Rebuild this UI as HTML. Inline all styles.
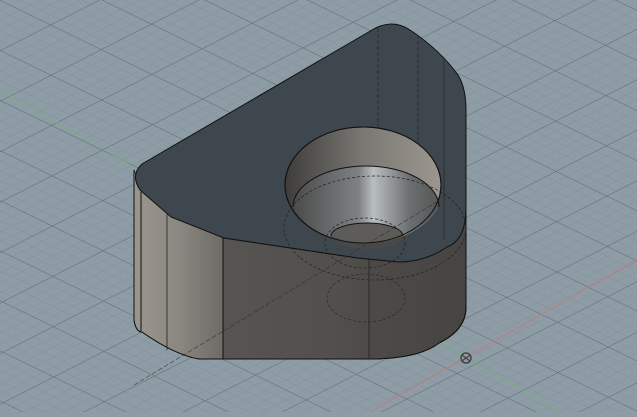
<!DOCTYPE html>
<html><head><style>html,body{margin:0;padding:0;background:#8e9da5;overflow:hidden}</style></head>
<body>
<svg width="637" height="412" viewBox="0 0 637 412" xmlns="http://www.w3.org/2000/svg">
<defs>
<pattern id="pa" width="200" height="9" patternUnits="userSpaceOnUse" patternTransform="rotate(26)">
<rect width="200" height="9" fill="none"/><line x1="0" y1="0" x2="200" y2="0" stroke="#7f8e96" stroke-width="0.8"/></pattern>
<pattern id="pb" width="200" height="9" patternUnits="userSpaceOnUse" patternTransform="rotate(-27)">
<line x1="0" y1="0" x2="200" y2="0" stroke="#7f8e96" stroke-width="0.8"/></pattern>
<pattern id="pA" width="400" height="45" patternUnits="userSpaceOnUse" patternTransform="rotate(26)">
<line x1="0" y1="0" x2="400" y2="0" stroke="#5f6c74" stroke-width="1"/></pattern>
<pattern id="pB" width="400" height="45" patternUnits="userSpaceOnUse" patternTransform="rotate(-27)">
<line x1="0" y1="0" x2="400" y2="0" stroke="#5f6c74" stroke-width="1"/></pattern>
<linearGradient id="gl" x1="0" x2="1"><stop offset="0" stop-color="#9a968f"/><stop offset="0.5" stop-color="#8b8781"/><stop offset="1" stop-color="#6e6b67"/></linearGradient>
<linearGradient id="gf" x1="0" x2="1"><stop offset="0" stop-color="#5a5855"/><stop offset="0.6" stop-color="#52504d"/><stop offset="1" stop-color="#3f3e3c"/></linearGradient>
<linearGradient id="gc" x1="0" x2="1"><stop offset="0" stop-color="#4a4a4a"/><stop offset="0.45" stop-color="#7e8284"/><stop offset="0.55" stop-color="#b9bec0"/><stop offset="0.8" stop-color="#6b6e70"/><stop offset="1" stop-color="#555"/></linearGradient>
<linearGradient id="gh" x1="0" x2="1"><stop offset="0" stop-color="#3e3d3b"/><stop offset="0.5" stop-color="#7b7873"/><stop offset="1" stop-color="#9b978f"/></linearGradient>
</defs>
<rect width="637" height="412" fill="#8e9da5"/>
<rect width="637" height="412" fill="url(#pa)"/>
<rect width="637" height="412" fill="url(#pb)"/>
<rect width="637" height="412" fill="url(#pA)"/>
<rect width="637" height="412" fill="url(#pB)"/>
<line x1="0" y1="90" x2="560" y2="412" stroke="#74b07c" stroke-width="1.2" opacity="0.8"/>
<line x1="370" y1="412" x2="637" y2="260" stroke="#c07a7e" stroke-width="1.2" opacity="0.8"/>
<path d="M134 170 L134 320 Q136 332 142 332 Q175 355 199 359 L374 359 Q420 358 439 343 Q466 330 466 307 L466 207 Q466 240 447 247 Q425 262 398 262 L358 258 L224 238 L171 217 L140 190 Z" fill="url(#gf)" stroke="#111" stroke-width="1"/>
<path d="M134 170 L134 320 Q136 332 142 332 Q175 355 199 359 L223 359 L223 238 L171 217 L140 190 Z" fill="url(#gl)"/>
<path d="M369 259 L369 359 L374 359 Q420 358 439 343 Q466 330 466 307 L466 207 Q466 240 447 247 Q425 262 398 262 Z" fill="#4c4a48" opacity="0.6"/>
<path d="M134 170 L134 320 Q136 332 142 332 Q175 355 199 359 L374 359 Q420 358 439 343 Q466 330 466 307 L466 207" fill="none" stroke="#111" stroke-width="1"/>
<line x1="141" y1="192" x2="141" y2="331" stroke="#111"/>
<line x1="167" y1="213" x2="167" y2="350" stroke="#222" stroke-width="0.8"/>
<line x1="223" y1="238" x2="223" y2="359" stroke="#111"/>
<line x1="369" y1="259" x2="369" y2="359" stroke="#222" stroke-width="0.8"/>
<ellipse cx="366" cy="298" rx="39" ry="24" fill="none" stroke="#2a2a2a" stroke-width="0.7" stroke-dasharray="3 2"/>
<path d="M140 190 Q130 175 142 164 L372 30 Q392 18 410 30 Q440 50 458 75 Q466 88 466 110 L466 207 Q466 240 447 247 Q425 262 398 262 L358 258 L224 238 L171 217 Z" fill="#3e474d" stroke="#111" stroke-width="1"/>
<line x1="378" y1="28" x2="378" y2="200" stroke="#222" stroke-width="0.7" stroke-dasharray="4 2"/>
<line x1="418" y1="35" x2="418" y2="200" stroke="#222" stroke-width="0.7" stroke-dasharray="4 2"/>
<line x1="444" y1="60" x2="444" y2="240" stroke="#222" stroke-width="0.7"/>
<ellipse cx="363" cy="185" rx="78" ry="58" fill="url(#gh)" stroke="#111" stroke-width="1"/>
<path d="M293 207 A73 41 0 0 1 439 207 A78 58 0 0 1 363 243 A78 58 0 0 1 293 207 Z" fill="url(#gc)"/>
<path d="M293 207 A73 41 0 0 1 439 207" fill="none" stroke="#111" stroke-width="1"/>
<ellipse cx="367" cy="236" rx="36" ry="13" fill="#4a4948"/>
<path d="M331 236 A36 13 0 0 1 403 236 A78 58 0 0 1 363 243 Q345 242 331 236Z" fill="#5e5c59"/>
<path d="M331 236 A36 13 0 0 1 403 236" fill="none" stroke="#111" stroke-width="1"/>
<ellipse cx="363" cy="185" rx="78" ry="58" fill="none" stroke="#111" stroke-width="1"/>
<ellipse cx="375" cy="228" rx="91" ry="52" fill="none" stroke="#222" stroke-width="0.7" stroke-dasharray="3 2"/>
<ellipse cx="365" cy="243" rx="40" ry="25" fill="none" stroke="#222" stroke-width="0.7" stroke-dasharray="3 2"/>
<line x1="134" y1="385" x2="440" y2="200" stroke="#2a2a2a" stroke-width="0.7" stroke-dasharray="5 2" opacity="0.7"/>
<circle cx="466" cy="358" r="5" fill="none" stroke="#444" stroke-width="1.5"/>
<line x1="462" y1="355" x2="470" y2="361" stroke="#444" stroke-width="1.2"/>
<line x1="462" y1="361" x2="470" y2="355" stroke="#444" stroke-width="1.2"/>
</svg>
</body></html>
